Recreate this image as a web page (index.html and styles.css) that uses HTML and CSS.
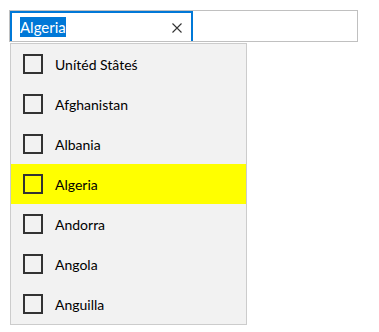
FILE: index.html
```html
<!DOCTYPE html>
<html>
<head>
<meta charset="utf-8">
<link rel="stylesheet" href="styles.css">
</head>
<body>
<div class="picker">
  <div class="field">
    <div class="input">
      <span class="sel">Algeria</span>
      <svg class="clear" width="10" height="10" viewBox="0 0 10 10"><path d="M0.5 0.5 L9.5 9.5 M9.5 0.5 L0.5 9.5" stroke="#333" stroke-width="1.1" fill="none"/></svg>
    </div>
  </div>
  <div class="menu">
    <div class="item"><span class="box"></span><span class="label">Unítéd Stâteś</span></div>
    <div class="item"><span class="box"></span><span class="label">Afghanistan</span></div>
    <div class="item"><span class="box"></span><span class="label">Albania</span></div>
    <div class="item active"><span class="box"></span><span class="label">Algeria</span></div>
    <div class="item"><span class="box"></span><span class="label">Andorra</span></div>
    <div class="item"><span class="box"></span><span class="label">Angola</span></div>
    <div class="item"><span class="box"></span><span class="label">Anguilla</span></div>
  </div>
</div>
</body>
</html>
```

FILE: styles.css
```css
* { box-sizing: border-box; }
html, body { margin: 0; padding: 0; background: #fff; }
body { font-family: "Segoe UI", Lato, "Noto Sans", sans-serif; font-size: 14px; color: #000; }
.picker { padding: 10px 0 0 9px; }
.field {
  width: 349px; height: 32px;
  border: 1px solid #c0c0c0;
  background: #fff;
}
.input {
  width: 183px; height: 30px;
  border: 2px solid #0078d7; border-bottom: none;
  display: flex; align-items: flex-start;
  padding: 4px 0 0 8px;
}
.sel {
  display: inline-block; height: 20px; line-height: 20px;
  background: #0078d7; color: #fff; font-size: 15px;
}
.clear { margin-left: auto; margin-right: 9px; margin-top: 6px; display: block; }
.menu {
  margin: 1px 0 0 1px;
  width: 237px;
  background: #f2f2f2; border: 1px solid #cccccc;
}
.item { height: 40px; display: flex; align-items: center; padding-left: 12px; }
.item.active { background: #ffff00; }
.box { width: 20px; height: 20px; border: 2px solid #333; flex: none; }
.label { margin-left: 12px; font-size: 14px; }
```
